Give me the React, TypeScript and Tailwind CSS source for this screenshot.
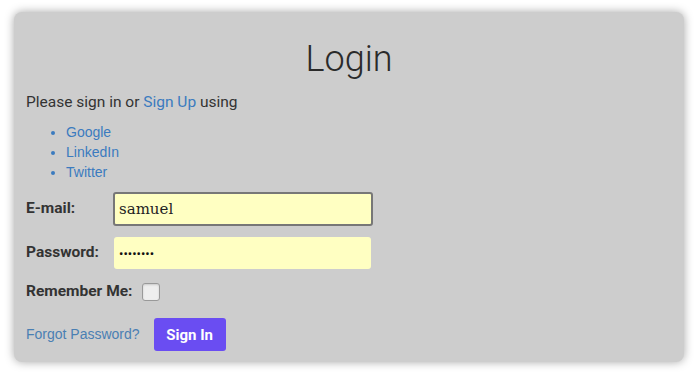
import { useState } from 'react';

const body = { fontFamily: '"Roboto", "Liberation Sans", sans-serif' };

export default function App() {
  const [remember, setRemember] = useState(false);

  return (
    <div className="min-h-[375px] w-full bg-white px-[14px] pt-[12px]">
      <div
        className="w-[670px] h-[350px] bg-[#cdcdcd] rounded-[8px] shadow-[0_0_10px_rgba(0,0,0,0.35)] px-[12px] pt-[26px] text-[#333]"
        style={body}
      >
        <h1 className="text-center text-[36px] leading-[42px] text-[#2a2a2a]" style={{ fontWeight: 300 }}>
          Login
        </h1>
        <p className="mt-[11px] text-[15.5px] leading-[22px] text-[#333]">
          Please sign in or <a className="text-[#3b7bbf]">Sign Up</a> using
        </p>
        <ul
          className="mt-[9px] list-disc pl-[40px] text-[14px] leading-[20px] text-[#3b7bbf]"
          style={{ fontFamily: '"Liberation Sans", Arial, sans-serif' }}
        >
          <li>Google</li>
          <li>LinkedIn</li>
          <li>Twitter</li>
        </ul>

        <div className="mt-[10px] flex items-center">
          <label className="w-[87px] text-[15.5px] font-bold text-[#333]">E-mail:</label>
          <input
            defaultValue="samuel"
            className="w-[260px] h-[34px] rounded-[3px] border-2 border-[#777] bg-[#ffffc2] px-[4px] text-[15px] text-[#222] outline-none"
            style={{ fontFamily: '"DejaVu Serif", serif' }}
          />
        </div>

        <div className="mt-[11px] flex items-center">
          <label className="w-[88px] text-[15.5px] font-bold text-[#333]">Password:</label>
          <input
            type="password"
            defaultValue="12345678"
            className="w-[257px] h-[32px] rounded-[3px] bg-[#ffffc2] px-[5px] text-[13px] text-[#111] outline-none"
          />
        </div>

        <div className="mt-[11px] flex items-center">
          <label className="text-[15.5px] font-bold text-[#333]">Remember Me:</label>
          <button
            type="button"
            onClick={() => setRemember(!remember)}
            className="ml-[10px] w-[18px] h-[18px] rounded-[3px] border border-[#999] bg-[#eee] shadow-[inset_0_1px_2px_rgba(0,0,0,0.15)]"
          />
        </div>

        <div className="mt-[15px] flex items-center">
          <a
            className="text-[14px] text-[#4a7fb3]"
            style={{ fontFamily: '"Liberation Sans", Arial, sans-serif' }}
          >
            Forgot Password?
          </a>
          <button
            type="button"
            className="ml-[14px] w-[72px] h-[33px] rounded-[3px] bg-[#6a4df2] text-white text-[15px] font-bold"
          >
            Sign In
          </button>
        </div>
      </div>
    </div>
  );
}
